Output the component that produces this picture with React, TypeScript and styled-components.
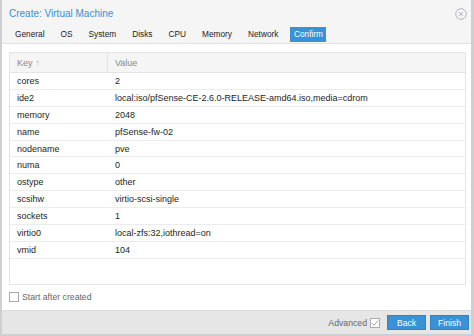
import React from "react";
import styled, { createGlobalStyle } from "styled-components";

const Global = createGlobalStyle`
  html, body { margin: 0; padding: 0; }
  body {
    background: #cfcfcf;
    font-family: "Liberation Sans", Arial, sans-serif;
    width: 474px;
    height: 336px;
    overflow: hidden;
  }
`;

const Window = styled.div`
  margin: 0 3px 0 2px;
  width: 469px;
  height: 334px;
  background: #f5f5f5;
  display: flex;
  flex-direction: column;
`;

const Header = styled.div`
  height: 26px;
  display: flex;
  align-items: center;
  justify-content: space-between;
  padding: 0 4px 0 7px;
  box-sizing: border-box;
`;

const Title = styled.div`
  color: #3a8fd3;
  font-size: 10px;
`;

const Close = styled.svg`
  width: 12px;
  height: 12px;
  margin-top: 1px;
`;

const TabBar = styled.div`
  height: 18px;
  display: flex;
  align-items: center;
  padding-left: 5px;
  border-bottom: 1px solid #e2e2e2;
  box-sizing: border-box;
`;

const Tab = styled.div<{ $active?: boolean }>`
  margin: 0 4px;
  padding: 0 ${(p) => (p.$active ? "3.5px" : "4px")};
  height: 15px;
  line-height: 15px;
  font-size: 8.3px;
  color: ${(p) => (p.$active ? "#fff" : "#222")};
  background: ${(p) => (p.$active ? "#3892d4" : "transparent")};
`;

const Body = styled.div`
  flex: 1;
  background: #fff;
  padding: 8px 5px 0 7px;
  display: flex;
  flex-direction: column;
`;

const Grid = styled.div`
  height: 233px;
  border: 1px solid #e4e4e4;
  box-sizing: border-box;
  display: flex;
  flex-direction: column;
`;

const HeadRow = styled.div`
  display: grid;
  grid-template-columns: 98px 1fr;
  height: 19px;
  background: #f5f5f5;
  border-bottom: 1px solid #e4e4e4;
  color: #888;
  font-size: 9px;
`;

const HeadCell = styled.div<{ $sep?: boolean }>`
  display: flex;
  align-items: center;
  padding-left: 7px;
  border-right: ${(p) => (p.$sep ? "1px solid #e2e2e2" : "none")};
`;

const Arrow = styled.span`
  color: #b0b0b0;
  margin-left: 3px;
`;

const Row = styled.div`
  display: grid;
  grid-template-columns: 98px 1fr;
  height: 16.9px;
  box-sizing: border-box;
  border-bottom: 1px solid #ececec;
  font-size: 9px;
  color: #1e1e1e;
  align-items: center;
`;

const Cell = styled.div`
  padding-left: 7px;
  white-space: nowrap;
`;

const CheckRow = styled.label`
  display: flex;
  align-items: center;
  height: 24px;
  font-size: 8.7px;
  color: #666;
`;

const Box = styled.span`
  width: 8px;
  height: 8px;
  border: 1px solid #aaa;
  background: #fff;
  display: inline-flex;
  align-items: center;
  justify-content: center;
  margin-right: 3px;
`;

const Footer = styled.div`
  height: 24px;
  background: #e6e6e6;
  border-top: 1px solid #dcdcdc;
  box-sizing: border-box;
  display: flex;
  align-items: center;
  justify-content: flex-end;
  padding-right: 2px;
  gap: 4px;
`;

const Advanced = styled.div`
  display: flex;
  align-items: center;
  gap: 3px;
  font-size: 8.7px;
  color: #666;
`;

const Button = styled.button`
  width: 39px;
  height: 15px;
  padding: 0;
  border: 1px solid #2f84c4;
  background: #3892d4;
  color: #fff;
  font-family: "Liberation Sans", Arial, sans-serif;
  font-size: 8.6px;
`;

const rows: [string, string][] = [
  ["cores", "2"],
  ["ide2", "local:iso/pfSense-CE-2.6.0-RELEASE-amd64.iso,media=cdrom"],
  ["memory", "2048"],
  ["name", "pfSense-fw-02"],
  ["nodename", "pve"],
  ["numa", "0"],
  ["ostype", "other"],
  ["scsihw", "virtio-scsi-single"],
  ["sockets", "1"],
  ["virtio0", "local-zfs:32,iothread=on"],
  ["vmid", "104"],
];

const tabs = ["General", "OS", "System", "Disks", "CPU", "Memory", "Network", "Confirm"];

export default function App() {
  return (
    <>
      <Global />
      <Window>
        <Header>
          <Title>Create: Virtual Machine</Title>
          <Close viewBox="0 0 12 12">
            <circle cx="6" cy="6" r="5.3" fill="none" stroke="#aab0b8" strokeWidth="0.9" />
            <path d="M4 4 L8 8 M8 4 L4 8" stroke="#aab0b8" strokeWidth="0.9" />
          </Close>
        </Header>
        <TabBar>
          {tabs.map((t) => (
            <Tab key={t} $active={t === "Confirm"}>
              {t}
            </Tab>
          ))}
        </TabBar>
        <Body>
          <Grid>
            <HeadRow>
              <HeadCell $sep>
                Key<Arrow>↑</Arrow>
              </HeadCell>
              <HeadCell>Value</HeadCell>
            </HeadRow>
            {rows.map(([k, v]) => (
              <Row key={k}>
                <Cell>{k}</Cell>
                <Cell>{v}</Cell>
              </Row>
            ))}
          </Grid>
          <CheckRow>
            <Box />
            Start after created
          </CheckRow>
        </Body>
        <Footer>
          <Advanced>
            Advanced
            <Box>
              <svg width="8" height="8" viewBox="0 0 8 8">
                <path d="M1 4.2 L3.2 6.3 L7 1.5" fill="none" stroke="#999" strokeWidth="0.9" />
              </svg>
            </Box>
          </Advanced>
          <Button>Back</Button>
          <Button>Finish</Button>
        </Footer>
      </Window>
    </>
  );
}
